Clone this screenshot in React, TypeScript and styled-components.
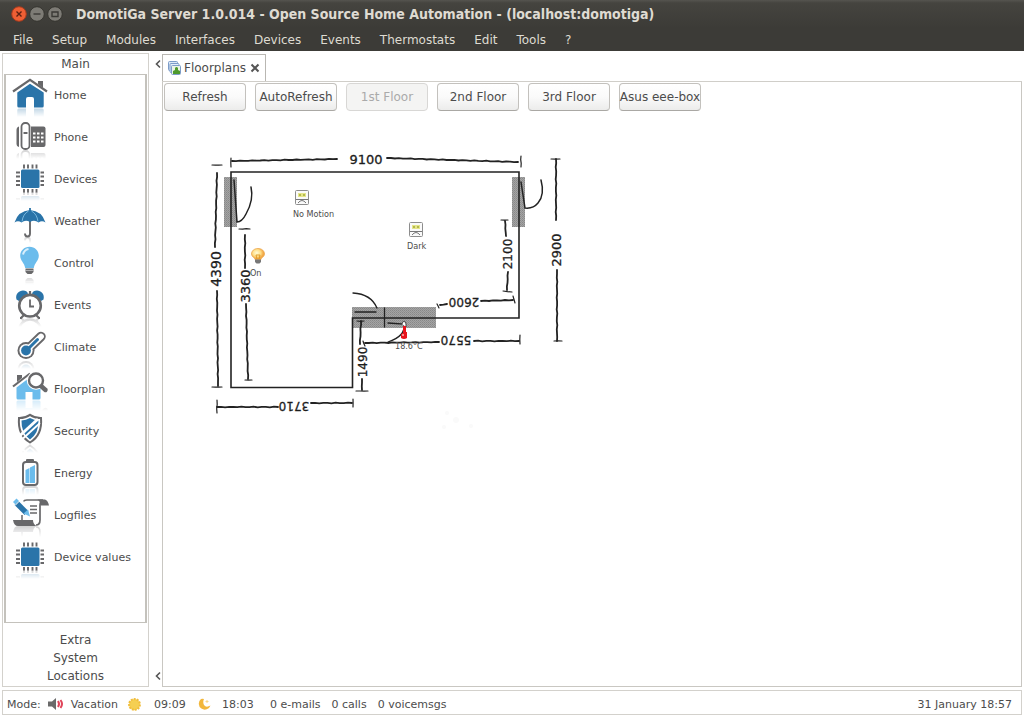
import React, { useId } from "react";
import styled, { createGlobalStyle } from "styled-components";

const GlobalStyle = createGlobalStyle`
  * { box-sizing: border-box; }
  body {
    margin: 0;
    background: #fff;
    color: #4c4c4c;
    font-family: "DejaVu Sans", Verdana, sans-serif;
    font-size: 12px;
  }
  button { font: inherit; color: inherit; background: none; border: 0; padding: 0; }
  a { color: inherit; text-decoration: none; }
  h1 { margin: 0; }
  svg { display: block; flex: none; }
`;

const Window = styled.div`
  display: flex;
  flex-direction: column;
  min-height: 100vh;
  padding-bottom: 5px;
`;

const Chrome = styled.header`
  background: linear-gradient(#55544f 0, #45443f 3px, #3c3b37 28px);
  color: #dfdbd2;
  height: 51px;
`;

const TitleBar = styled.div`
  display: flex;
  align-items: center;
  height: 28px;
  padding-left: 11px;
`;

const WindowButtons = styled.div`
  display: flex;
  gap: 2px;
  margin-right: 13px;
`;

const WindowButton = styled.button`
  width: 16px;
  height: 16px;
`;

const Title = styled.h1`
  font: bold 14px/20px "DejaVu Sans Condensed", "DejaVu Sans", sans-serif;
  white-space: nowrap;
`;

const MenuBar = styled.nav`
  display: flex;
  gap: 19px;
  padding: 1px 0 0 13px;
  line-height: 23px;
`;

const Workspace = styled.div`
  display: flex;
  flex: 1;
  padding: 2px 2px 0;
`;

const Sidebar = styled.aside`
  display: flex;
  flex-direction: column;
  width: 147px;
  flex: none;
  border: 1px solid #d3d1cc;
  padding: 0 1px 1px;
`;

const Section = styled.button`
  height: 18px;
  line-height: 18px;
`;

const FirstSection = styled(Section)`
  height: 20px;
  line-height: 20px;
`;

const NavList = styled.ul`
  flex: 1;
  list-style: none;
  margin: 0 0 8px;
  padding: 0;
  border: 1px solid #c4c2bc;
  border-width: 1px 2px;
`;

const NavLink = styled.a`
  display: flex;
  gap: 4px;
  height: 42px;
  padding-left: 6px;
  font-size: 11px;
  line-height: 42px;
  white-space: nowrap;
`;

const Gutter = styled.div`
  display: flex;
  flex-direction: column;
  justify-content: space-between;
  align-items: flex-end;
  width: 13px;
  flex: none;
  padding: 6px 1px;
`;

const Collapse = styled.button`
  width: 6px;
  height: 10px;
`;

const Main = styled.main`
  display: flex;
  flex-direction: column;
  flex: 1;
  min-width: 0;
`;

const TabStrip = styled.div`
  display: flex;
  height: 29px;
  padding-top: 1px;
  border-bottom: 1px solid #d0cec9;
`;

const Tab = styled.div`
  display: flex;
  align-items: center;
  gap: 3px;
  padding: 0 4px 0 5px;
  border: 1px solid #b9b7b2;
  border-width: 1px 1px 0;
`;

const Panel = styled.section`
  flex: 1;
  border: 1px solid #c9c7c2;
  border-top: 0;
  padding-top: 1px;
`;

const Toolbar = styled.div`
  display: flex;
  gap: 9px;
  padding-left: 1px;
`;

const FloorButton = styled.button`
  display: flex;
  align-items: center;
  justify-content: center;
  width: 82px;
  height: 28px;
  border: 1px solid #c3c1bd;
  border-bottom-color: #aaa8a4;
  border-radius: 4px;
  background: linear-gradient(#fff, #fafafa 50%, #ececeb);
  white-space: nowrap;
  &:disabled {
    color: #aaa;
    border-color: #d8d7d5;
    background: #f4f4f3;
  }
`;

const Plan = styled.div`
  position: relative;
  margin-top: 29px;
  width: 440px;
  height: 310px;
`;

const Pin = styled.div<{ $x: number; $y: number }>`
  position: absolute;
  left: ${(p) => p.$x}px;
  top: ${(p) => p.$y}px;
`;

const PinLabel = styled(Pin)`
  font: 9px/10px "DejaVu Sans Condensed", "DejaVu Sans", sans-serif;
  white-space: nowrap;
`;

const StatusBar = styled.footer`
  display: flex;
  align-items: center;
  height: 25px;
  margin: 3px 2px 0;
  padding: 3px 9px 0 4px;
  border: 1px solid #d3d1cc;
  font-size: 11px;
  white-space: nowrap;
`;

const StatusGroup = styled.div<{ $gap: number; $width?: number }>`
  display: flex;
  align-items: center;
  gap: ${(p) => p.$gap}px;
  width: ${(p) => (p.$width ? `${p.$width}px` : "auto")};
`;

const Clock = styled.time`
  margin-left: auto;
`;

const G = "#68686a";
const B = "#2a74a9";
const L = "#6bbcec";

const Chip = (
  <>
    <path
      d="M12 2.500v28M16 2.500v28M20.500 2.500v28M24.500 2.500v28M4 10.500h28M4 14.500h28M4 19h28M4 23h28"
      stroke={G}
      strokeWidth="1.900"
    />
    <rect x="8" y="6.500" width="20.500" height="20.500" fill="#fff" />
    <rect x="9" y="7.500" width="18.500" height="18.500" rx="1.500" fill={B} />
  </>
);

const art: Record<string, React.ReactNode> = {
  Home: (
    <>
      <path d="M26 3h5v7l-5-4z" fill={G} />
      <path d="M1 13.500 18 1.800 35 13.500" fill="none" stroke={G} strokeWidth="2.200" />
      <path d="M5.300 14.500 18 5.800l13.700 8.700V28q0 1.500-1.500 1.500H22V21q0-2-2-2h-4q-2 0-2 2v8.500H6.800q-1.500 0-1.500-1.500z" fill={B} />
    </>
  ),
  Phone: (
    <>
      <path d="M7 6.500Q4.500 7 4.500 10v13.500q0 3 2.500 3.500z" fill={G} />
      <rect x="9.500" y="3" width="8" height="26" rx="3.500" fill="#fff" stroke={G} strokeWidth="1.800" />
      <path d="M11.500 13h4" stroke={G} strokeWidth="2" />
      <path d="M19 6.500h12.500q2 0 2 2v16.500q0 2-2 2H19z" fill={G} />
      <path d="M21 13.500h2.500m1.500 0h2.500m1.500 0H31.500M21 17.500h2.500m1.500 0h2.500m1.500 0H31.500M21 21.500h2.500m1.500 0h2.500m1.500 0H31.500" stroke="#fff" strokeWidth="2.200" />
    </>
  ),
  Devices: Chip,
  Weather: (
    <>
      <path d="M18 16v13.500q0 3-2.500 3-2.500 0-2.500-3" fill="none" stroke={G} strokeWidth="1.900" />
      <path d="M18 4v3" stroke={B} strokeWidth="1.800" />
      <path d="M2.500 18.500Q6 7 18 6q12 1 15.500 12.500-3.500-2.500-7 0-4-3-8.500-.500-4.500-2.500-8.500.500-3.500-2.500-7 0z" fill={B} />
      <path d="M10 17.500Q11 10 16.500 7M26 17.500Q25 10 19.500 7" fill="none" stroke="#79b8de" />
    </>
  ),
  Control: (
    <>
      <path d="M17.500.700c5.500 0 9.300 4 9.300 9 0 5-4.300 7-5 12.300h-8.600c-.700-5.300-5-7.300-5-12.300 0-5 3.800-9 9.300-9z" fill={L} />
      <path d="M11 8.500q1-4.500 5.500-5.500" fill="none" stroke="#d9effc" strokeWidth="2" />
      <path d="M13.500 22.500h8v3.500l-2 2h-4l-2-2z" fill={G} />
      <path d="M13.500 24.500h8" stroke="#ccc" strokeWidth=".700" />
    </>
  ),
  Events: (
    <>
      <path d="M4.500 11.500C3 6 7 2.500 11 2.500q4 0 5 3L7 13zM31.500 11.500C33 6 29 2.500 25 2.500q-4 0-5 3L29 13z" fill={B} />
      <path d="M18 3v4M12 27l-3 3h-1M24 27l3 3h1" stroke={G} strokeWidth="2.200" fill="none" />
      <circle cx="18" cy="17.700" r="10.800" fill="#fff" stroke={G} strokeWidth="2.600" />
      <path d="M18 11.500v7h4" stroke={G} strokeWidth="1.800" fill="none" />
    </>
  ),
  Climate: (
    <>
      <path d="M14.500 20.500 29 6.500" stroke={G} strokeWidth="9.500" strokeLinecap="round" />
      <circle cx="14" cy="20.500" r="8.500" fill={G} />
      <circle cx="14" cy="20.500" r="6.600" fill="#fff" />
      <path d="M14.500 20.500 29 6.500" stroke="#fff" strokeWidth="5.800" strokeLinecap="round" />
      <circle cx="14" cy="20.500" r="4.900" fill={B} />
      <path d="M14.500 20.500 25.500 9.500" stroke={B} strokeWidth="3" strokeLinecap="round" />
    </>
  ),
  Floorplan: (
    <>
      <path d="M5 3h5v3l-5 4z" fill={G} />
      <path d="M1 14.500 18 1.500" stroke={G} strokeWidth="2.200" />
      <path d="M4.500 15.500 17 6l11.500 9.500V26q0 1.500-1.500 1.500h-6.500V20h-7v7.500H6q-1.500 0-1.500-1.500z" fill={L} />
      <circle cx="24" cy="8.500" r="9.200" fill="#fff" />
      <path d="m28.500 13.500 5 4.500" stroke={G} strokeWidth="4.400" strokeLinecap="round" />
      <circle cx="24" cy="8.500" r="7" fill="#fff" stroke={G} strokeWidth="2.400" />
    </>
  ),
  Security: (
    <>
      <path d="M18 .800q5 3.400 11 3.200c1 12-2.500 19.500-11 24.500C9.500 23.500 6 16 7 4q6 .200 11-3.200z" fill="#fff" stroke={G} strokeWidth="2" />
      <path d="M18 4q4 2.400 8.500 2.500Q27 19 18 25.500 9 19 9.500 6.500 14 6.400 18 4z" fill={B} />
      <path d="M8 21.500 26 5" stroke="#fff" strokeWidth="3" />
      <path d="M11 24.500 28 9" stroke="#fff" strokeWidth="1.800" />
    </>
  ),
  Energy: (
    <>
      <path d="M14 6V4q0-1 1-1h6q1 0 1 1v2z" fill={G} />
      <rect x="11" y="6" width="14.500" height="23" rx="3" fill="#fff" stroke={G} strokeWidth="2" />
      <path d="m13.500 14 4-2v15h-4zM18 11.500 23 9v18h-5z" fill={L} />
    </>
  ),
  Logfiles: (
    <>
      <path d="M12 3.500Q12 2 15 2h16q-3 1.500-3 5v15q0 5-4 5" fill="#fff" stroke={G} strokeWidth="1.700" />
      <path d="M27 1.500h6q3 1 4 6h-8.500q0-4-3-6z" fill={G} />
      <path d="M1 22h20q0 4 3.500 6H6q-4 0-5-6z" fill={G} />
      <path d="M10 22v-5M18 8h7M18 11.500h7M18 15h7" stroke={G} strokeWidth="1.500" />
      <path d="m4.500 5 10 10" stroke={B} strokeWidth="5.500" />
      <path d="m1 4 3.500-3.500L7 3 3.500 6.500z" fill={L} />
      <path d="m11.500 15.500 4.500-4 2 7z" fill={L} />
      <path d="m3 7.500 4.500-4.500" stroke="#fff" />
    </>
  ),
  "Device values": Chip,
};

function NavIcon({ name }: { name: string }) {
  const id = useId();
  const base = name === "Weather" ? 36 : name === "Logfiles" || name === "Floorplan" ? 31 : 33;
  return (
    <svg width="38" height="42" aria-hidden="true">
      <defs>
        <linearGradient id={`${id}g`} x1="0" y1={base} x2="0" y2="42" gradientUnits="userSpaceOnUse">
          <stop stopColor="#fff" stopOpacity=".3" />
          <stop offset="1" stopColor="#fff" stopOpacity="0" />
        </linearGradient>
        <mask id={`${id}m`} maskUnits="userSpaceOnUse" x="0" y="0" width="38" height="42">
          <rect y={base} width="38" height="12" fill={`url(#${id}g)`} />
        </mask>
      </defs>
      <g mask={`url(#${id}m)`}>
        <g transform={`matrix(1 0 0 -1 0 ${base * 2 - 3})`}>{art[name]}</g>
      </g>
      <g transform="translate(0 3)">{art[name]}</g>
    </svg>
  );
}

/* A pen stroke between two points, with the slight wobble of a hand. */
function Pen({ p, w = 1.8 }: { p: [number, number, number, number]; w?: number }) {
  const [x1, y1, x2, y2] = p;
  const len = Math.hypot(x2 - x1, y2 - y1);
  const n = Math.max(2, Math.round(len / 4));
  let d = "";
  for (let i = 0; i <= n; i++) {
    const t = i / n;
    const o = i === 0 || i === n ? 0 : Math.sin(i * 2.3 + x1) * 0.3;
    const x = x1 + (x2 - x1) * t - ((y2 - y1) / len) * o;
    const y = y1 + (y2 - y1) * t + ((x2 - x1) / len) * o;
    d += `${i ? "L" : "M"}${x.toFixed(1)} ${y.toFixed(1)}`;
  }
  return <path d={d} fill="none" stroke="#222" strokeWidth={w} strokeLinecap="round" />;
}

const strokes: [number, number, number, number][] = [
  [232, 161, 337, 159], [387, 158, 518, 162],
  [217, 173, 215, 247], [217, 291, 218, 386],
  [245, 235, 245, 268], [246, 304, 248, 379],
  [556, 159, 556, 220], [557, 270, 557, 341],
  [505, 221, 506, 236], [508, 272, 507, 290],
  [361, 321, 360, 344], [362, 379, 362, 390],
  [217, 407, 278, 407], [311, 403, 352, 403],
  [440, 305, 447, 304], [481, 301, 513, 300],
  [365, 343, 439, 342], [474, 341, 519, 341],
];

const ticks: [number, number, number, number][] = [
  [231, 158, 231, 167], [521, 156, 521, 167], [212, 165, 222, 165],
  [239, 229, 250, 229], [212, 387, 222, 387], [245, 380, 252, 380],
  [551, 159, 560, 159], [554, 341, 562, 341], [501, 220, 508, 220],
  [503, 291, 512, 292], [357, 321, 364, 321], [356, 391, 368, 391],
  [217, 400, 217, 413], [353, 399, 353, 407], [437, 304, 439, 308],
  [513, 296, 515, 303], [520, 335, 520, 344], [363, 341, 365, 346],
];

const dimensions: { t: string; x: number; y: number; r: number; size: number }[] = [
  { t: "9100", x: 366, y: 159, r: 0, size: 13 },
  { t: "4390", x: 216, y: 269, r: -90, size: 14 },
  { t: "3360", x: 245, y: 286, r: -90, size: 13 },
  { t: "2100", x: 507, y: 254, r: -90, size: 12 },
  { t: "2900", x: 556, y: 250, r: -90, size: 13 },
  { t: "1490", x: 362, y: 362, r: -90, size: 12 },
  { t: "3710", x: 294, y: 407, r: 180, size: 12 },
  { t: "2600", x: 464, y: 303, r: 180, size: 12 },
  { t: "5570", x: 456, y: 341, r: 180, size: 12 },
];

function FloorDrawing() {
  return (
    <svg width="440" height="310" viewBox="163 140 440 310" role="img" aria-label="Floor plan">
      <defs>
        <pattern id="hatch" width="2" height="2" patternUnits="userSpaceOnUse">
          <rect width="2" height="2" fill="#a4a4a4" />
          <rect width="1" height="1" fill="#888" />
          <rect x="1" y="1" width="1" height="1" fill="#929292" />
        </pattern>
      </defs>
      <g fill="url(#hatch)">
        <rect x="224" y="177" width="13" height="50" />
        <rect x="512" y="177" width="13" height="50" />
        <rect x="352" y="307" width="84" height="21" />
      </g>
      <path d="M231 172H519V318H352.500V387.500H231z" fill="none" stroke="#222" strokeWidth="1.600" />
      <g fill="none" stroke="#222" strokeWidth="1.500" strokeLinecap="round">
        <path d="M234 180l3 42q5 0 9-8 8-14 5-27" />
        <path d="M521 182l4 26q8 1 13-5 7-8 3-23" />
        <path d="M353 293q18 1 24 15M355 312h21M384.500 308v19" strokeWidth="1.300" />
        <path d="M388 323l16 1q2 12-16 18" strokeWidth="1.300" />
      </g>
      {strokes.map((p, i) => <Pen key={i} p={p} />)}
      {ticks.map((p, i) => <Pen key={i} p={p} w={1.2} />)}
      <g
        fill="#1c1c1c"
        stroke="#1c1c1c"
        strokeWidth=".300"
        fontFamily="DejaVu Sans, sans-serif"
        textAnchor="middle"
      >
        {dimensions.map((d) => (
          <text key={d.t} x="0" y="5" fontSize={d.size} transform={`translate(${d.x} ${d.y}) rotate(${d.r})`}>
            {d.t}
          </text>
        ))}
      </g>
      <g fill="#fafafa">
        <circle cx="447" cy="413" r="2" />
        <circle cx="456" cy="420" r="3" />
        <circle cx="444" cy="427" r="2" />
        <circle cx="471" cy="426" r="2" />
      </g>
    </svg>
  );
}

const Sensor = () => (
  <svg width="14" height="15" aria-hidden="true">
    <rect x=".500" y=".500" width="13" height="14" rx="1" fill="#fafafa" stroke="#8d8d8d" />
    <rect x="3" y="3" width="8" height="4" fill="#e6e68a" />
    <path d="M4 5h2M8 5h2" stroke="#a3ab3c" strokeWidth="1.500" />
    <path d="M1 9.500h12M3 13q4-5 8 0" fill="none" stroke="#777" />
  </svg>
);

const Lamp = () => (
  <svg width="14" height="16" aria-hidden="true">
    <defs>
      <radialGradient id="glow" cx=".4" cy=".4">
        <stop stopColor="#fffbd8" />
        <stop offset=".6" stopColor="#ffe08a" />
        <stop offset="1" stopColor="#f3ab48" />
      </radialGradient>
    </defs>
    <path d="M7 .500c4 0 6.500 2.500 6.500 5.500S10 9.500 10 11.500H4C4 9.500.500 9 .500 6S3 .500 7 .500z" fill="url(#glow)" stroke="#e9a044" strokeWidth=".700" />
    <path d="M5 7l1 4M9 7l-1 4M5 7h4" stroke="#d9921c" fill="none" strokeWidth=".800" />
    <path d="M4 11.500h6V14l-1.500 1.500h-3L4 14z" fill="#777" />
  </svg>
);

const Thermometer = () => (
  <svg width="8" height="19" aria-hidden="true">
    <path d="M2 3q0-2.500 2-2.500T6 3v3" fill="#fff" stroke="#444" />
    <path d="M3 5h3v6h1v6q-3 2-6 0v-4l2-1z" fill="#e8141c" />
    <path d="M3 13v2" stroke="#fff" />
  </svg>
);

const menus = ["File", "Setup", "Modules", "Interfaces", "Devices", "Events", "Thermostats", "Edit", "Tools", "?"];
const floors = ["Refresh", "AutoRefresh", "1st Floor", "2nd Floor", "3rd Floor", "Asus eee-box"];

const controls = [
  { label: "Close", fill: "#ee5f34", edge: "#a53a1d", ink: "#5b2112", d: "M5.500 5.500l5 5M10.500 5.500l-5 5" },
  { label: "Minimize", fill: "#7d7b75", edge: "#35342f", ink: "#3a3935", d: "M4.500 8h7" },
  { label: "Maximize", fill: "#7d7b75", edge: "#35342f", ink: "#3a3935", d: "M5 6h6v4.500H5z" },
];

function Chevron({ label }: { label: string }) {
  return (
    <Collapse aria-label={label}>
      <svg width="6" height="10" aria-hidden="true">
        <path d="M5 1.500 1.500 5 5 8.500" fill="none" stroke="#555" strokeWidth="1.600" />
      </svg>
    </Collapse>
  );
}

export default function App() {
  return (
    <Window>
      <GlobalStyle />
      <Chrome>
        <TitleBar>
          <WindowButtons>
            {controls.map((c) => (
              <WindowButton key={c.label} aria-label={c.label}>
                <svg width="16" height="16" aria-hidden="true">
                  <circle cx="8" cy="8" r="7.300" fill={c.fill} stroke={c.edge} />
                  <path d={c.d} fill="none" stroke={c.ink} strokeWidth="1.400" />
                </svg>
              </WindowButton>
            ))}
          </WindowButtons>
          <Title>DomotiGa Server 1.0.014 - Open Source Home Automation - (localhost:domotiga)</Title>
        </TitleBar>
        <MenuBar>
          {menus.map((m) => <button key={m}>{m}</button>)}
        </MenuBar>
      </Chrome>
      <Workspace>
        <Sidebar>
          <FirstSection>Main</FirstSection>
          <NavList>
            {Object.keys(art).map((name) => (
              <li key={name}>
                <NavLink href="#"><NavIcon name={name} /><span>{name}</span></NavLink>
              </li>
            ))}
          </NavList>
          <Section>Extra</Section>
          <Section>System</Section>
          <Section>Locations</Section>
        </Sidebar>
        <Gutter>
          <Chevron label="Collapse sidebar" />
          <Chevron label="Collapse sections" />
        </Gutter>
        <Main>
          <TabStrip>
            <Tab>
              <svg width="13" height="14" aria-hidden="true">
                <rect x=".500" y=".500" width="9" height="9" rx="1" fill="#dce8f6" stroke="#7c9cc8" />
                <rect x="2" y="2.500" width="9" height="9" rx="1" fill="#e4eefa" stroke="#7c9cc8" />
                <rect x="3.500" y="4.500" width="9" height="9" rx="1" fill="#eaf4e4" stroke="#7c9cc8" />
                <path d="M5 13v-3l2-1V7q1.500-2 3 0v2l2 1v3z" fill="#4e9a2c" />
              </svg>
              <button>Floorplans</button>
              <button aria-label="Close tab">
                <svg width="12" height="10" aria-hidden="true">
                  <path d="M2.500 1.500l7 7M9.500 1.500l-7 7" stroke="#555" strokeWidth="2" />
                </svg>
              </button>
            </Tab>
          </TabStrip>
          <Panel>
            <Toolbar>
              {floors.map((f) => (
                <FloorButton key={f} disabled={f === "1st Floor"}>{f}</FloorButton>
              ))}
            </Toolbar>
            <Plan>
              <FloorDrawing />
              <Pin $x={132} $y={50}><Sensor /></Pin>
              <PinLabel $x={130} $y={69}>No Motion</PinLabel>
              <Pin $x={246} $y={82}><Sensor /></Pin>
              <PinLabel $x={244} $y={101}>Dark</PinLabel>
              <Pin $x={88} $y={108}><Lamp /></Pin>
              <PinLabel $x={87} $y={128}>On</PinLabel>
              <Pin $x={237} $y={181}><Thermometer /></Pin>
              <PinLabel $x={232} $y={201}>18.6°C</PinLabel>
            </Plan>
          </Panel>
        </Main>
      </Workspace>
      <StatusBar>
        <StatusGroup $gap={5} $width={121}>
          <span>Mode:</span>
          <svg width="20" height="12" aria-hidden="true">
            <path d="M2 3.500h4L10 0v12L6 8.500H2z" fill="#6a6a6a" />
            <path d="M12 3q2 3 0 6M14.500 2q3 4 0 8" fill="none" stroke="#e0455a" strokeWidth="2" />
          </svg>
          <span>Vacation</span>
        </StatusGroup>
        <StatusGroup $gap={13} $width={70}>
          <svg width="13" height="13" aria-hidden="true">
            <circle cx="6.500" cy="6.500" r="5.400" fill="#f5cf52" stroke="#f0bd3c" strokeWidth="2" strokeDasharray="2 1" />
          </svg>
          <time>09:09</time>
        </StatusGroup>
        <StatusGroup $gap={11} $width={72}>
          <svg width="13" height="13" aria-hidden="true">
            <path d="M3 1a6 6 0 1 0 9.500 6.500Q8 10 6 7 4.500 4 6 1 4.500.500 3 1z" fill="#f2b73c" />
            <path d="M9 2v3M7.500 3.500h3" stroke="#f6d78b" />
          </svg>
          <time>18:03</time>
        </StatusGroup>
        <StatusGroup $gap={11}>
          <span>0 e-mails</span>
          <span>0 calls</span>
          <span>0 voicemsgs</span>
        </StatusGroup>
        <Clock>31 January 18:57</Clock>
      </StatusBar>
    </Window>
  );
}
